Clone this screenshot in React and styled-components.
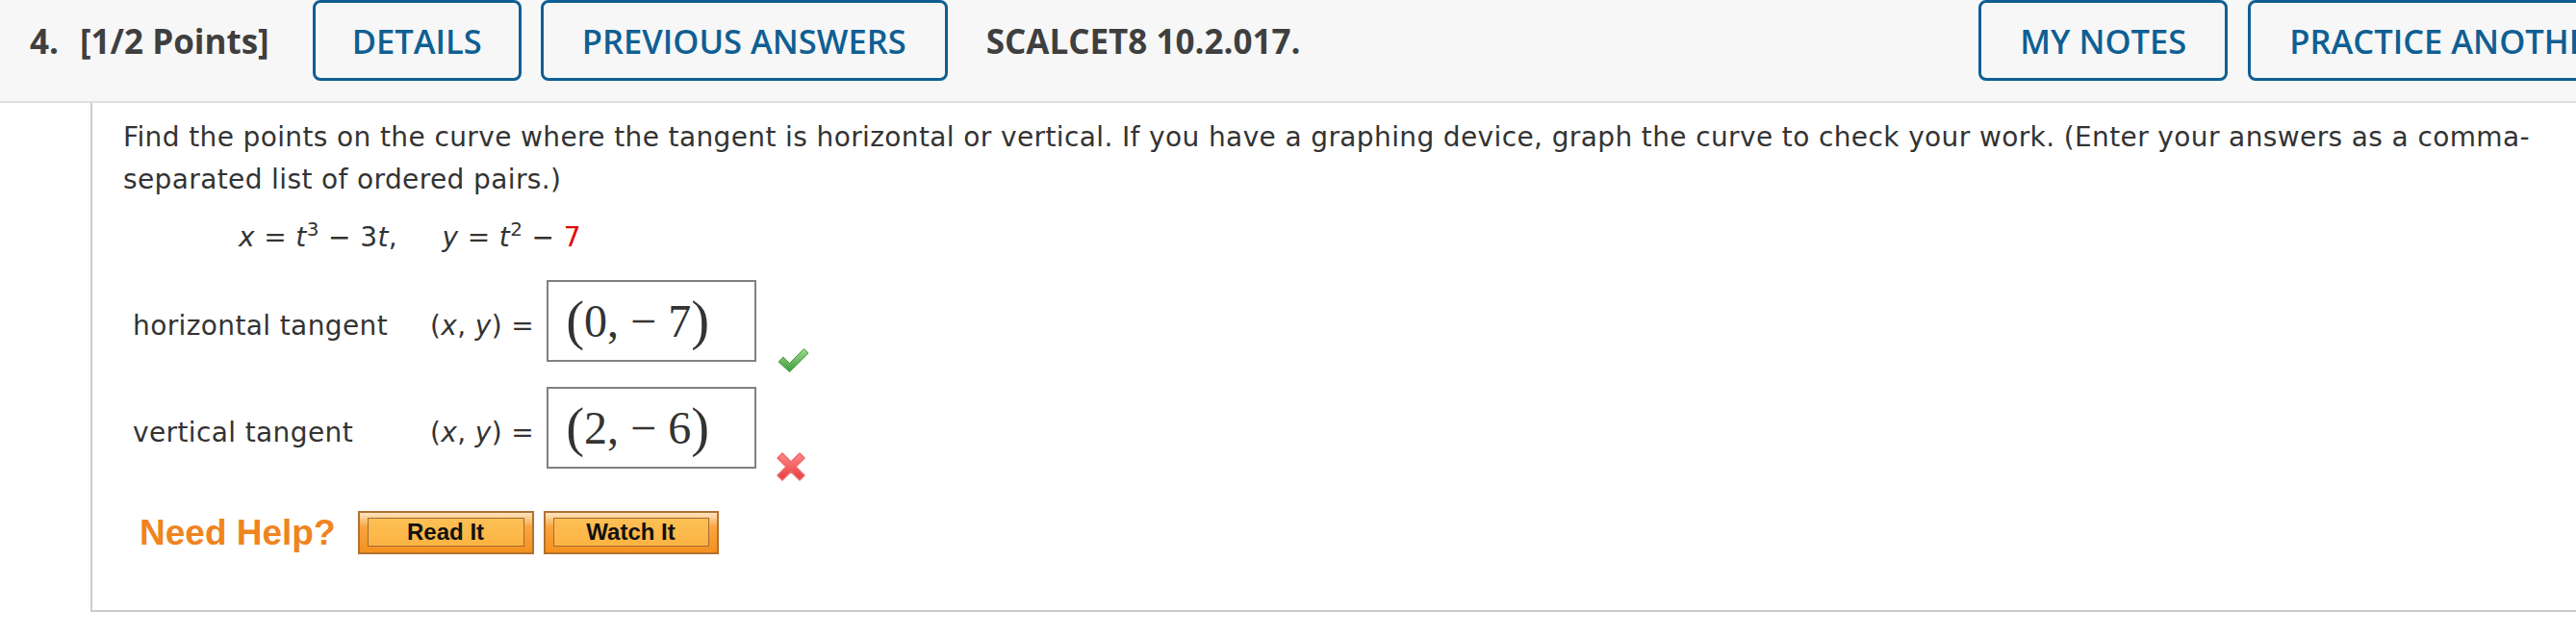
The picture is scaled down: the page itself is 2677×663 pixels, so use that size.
import React from 'react';
import styled, { createGlobalStyle } from 'styled-components';

const GlobalStyle = createGlobalStyle`
  html, body {
    margin: 0;
    padding: 0;
    background: #fff;
  }
  body {
    overflow: hidden;
  }
`;

const Page = styled.div`
  width: 2677px;
  height: 663px;
  overflow: hidden;
  background: #fff;
`;

const Header = styled.header`
  height: 84px;
  padding-bottom: 21px;
  background: #f7f7f7;
  border-bottom: 2px solid #dedede;
  overflow: hidden;
`;

const HeaderRow = styled.div`
  display: flex;
  align-items: center;
  width: 2754px;
  height: 100%;
  padding-left: 31px;
  box-sizing: border-box;
  font-family: "Open Sans", sans-serif;
  white-space: nowrap;
`;

const HeadText = styled.span`
  flex-shrink: 0;
  margin-left: ${(p) => p.$gap || 0}px;
  font-size: 35px;
  font-weight: 700;
  color: #3f3f3f;
`;

const OutlineButton = styled.button`
  flex-shrink: 0;
  height: 84px;
  margin-left: ${(p) => p.$gap || 0}px;
  padding: 0 ${(p) => p.$pad || 40}px;
  border: 3px solid #0f5f93;
  border-radius: 8px;
  background: transparent;
  color: #0f5f93;
  font-family: "Open Sans", sans-serif;
  font-size: 34.5px;
  font-weight: 600;
  white-space: nowrap;
  cursor: pointer;
`;

const RightGroup = styled.div`
  display: flex;
  gap: 21px;
  margin-left: auto;
`;

const Panel = styled.section`
  width: 2700px;
  margin-left: 94px;
  padding: 14px 0 58px 32px;
  box-sizing: border-box;
  border-left: 2px solid #cccccc;
  border-bottom: 2px solid #cccccc;
  font-family: "DejaVu Sans", Verdana, sans-serif;
  font-size: 28px;
  letter-spacing: 0.38px;
  line-height: 44px;
  color: #333;
`;

const Prompt = styled.p`
  margin: 0;
  white-space: nowrap;
`;

const Equation = styled.div`
  margin-top: 16px;
  padding-left: 120px;
  white-space: pre;
`;

const Var = styled.i`
  font-style: italic;
`;

const Sup = styled.sup`
  font-size: 20px;
  line-height: 0;
  vertical-align: 11px;
`;

const Red = styled.span`
  color: #e60000;
`;

const AnswerRow = styled.div`
  display: flex;
  align-items: center;
  margin-top: ${(p) => p.$top}px;
  padding-left: 10px;
`;

const RowLabel = styled.span`
  flex: 0 0 309px;
  padding-top: 10px;
`;

const Coords = styled.span`
  padding-top: 10px;
  margin-right: 13px;
`;

const AnswerBox = styled.div`
  display: flex;
  align-items: center;
  width: 218px;
  height: 85px;
  padding-left: 18px;
  box-sizing: border-box;
  border: 2px solid #808080;
  font-family: "Liberation Serif", "DejaVu Serif", serif;
  font-size: 48px;
  letter-spacing: 0;
  line-height: 1;
  color: #333;
  white-space: pre;
`;

const Paren = styled.span`
  font-size: 1.18em;
`;

const Mark = styled.svg`
  align-self: flex-end;
  margin-left: ${(p) => p.$left}px;
  margin-bottom: ${(p) => p.$drop}px;
`;

const HelpRow = styled.div`
  display: flex;
  align-items: center;
  gap: 10px;
  margin-top: 44px;
  padding-left: 17px;
`;

const NeedHelp = styled.span`
  margin-right: 13px;
  font-family: "Liberation Sans", Arial, sans-serif;
  font-size: 37px;
  font-weight: 700;
  letter-spacing: 0;
  line-height: 1;
  color: #ef8420;
`;

const HelpButton = styled.button`
  width: ${(p) => p.$w}px;
  height: 45px;
  padding: 5px 8px 6px;
  box-sizing: border-box;
  border: 2px solid #b3712f;
  background: linear-gradient(#ffe6c2 0%, #f9a640 35%, #f3901f 100%);
  cursor: pointer;
`;

const HelpFace = styled.span`
  display: flex;
  align-items: center;
  justify-content: center;
  height: 100%;
  box-sizing: border-box;
  border: 1.5px solid #a36c33;
  background: linear-gradient(#fdbf55, #fcb443);
  font-family: "Liberation Sans", Arial, sans-serif;
  font-size: 24px;
  font-weight: 700;
  color: #111;
`;

const CheckIcon = () => (
  <Mark width="33" height="27" viewBox="0 0 33 27" $left={22} $drop={-12}>
    <defs>
      <linearGradient id="okGrad" x1="0" y1="0" x2="0" y2="1">
        <stop offset="0" stopColor="#9ddb8c" />
        <stop offset="1" stopColor="#3f9b3c" />
      </linearGradient>
    </defs>
    <path
      d="M1 15 L6 10 L12.5 16.5 L27.5 1.5 L32 6 L12.5 25.5 Z"
      fill="url(#okGrad)"
      stroke="#4c9c45"
      strokeWidth="1"
      strokeLinejoin="round"
    />
  </Mark>
);

const CrossIcon = () => (
  <Mark width="30" height="30" viewBox="0 0 30 30" $left={21} $drop={-13}>
    <defs>
      <linearGradient id="noGrad" x1="0" y1="0" x2="0" y2="1">
        <stop offset="0" stopColor="#ff8a8a" />
        <stop offset="1" stopColor="#e53b3b" />
      </linearGradient>
    </defs>
    <path
      d="M6 1 L15 10 L24 1 L29 6 L20 15 L29 24 L24 29 L15 20 L6 29 L1 24 L10 15 L1 6 Z"
      fill="url(#noGrad)"
      stroke="#f06a6a"
      strokeWidth="1.5"
      strokeLinejoin="round"
    />
  </Mark>
);

const XY = () => (
  <Coords>
    (<Var>x</Var>, <Var>y</Var>) =
  </Coords>
);

const App = () => {
  return (
    <Page>
      <GlobalStyle />
      <Header>
        <HeaderRow>
          <HeadText>4.</HeadText>
          <HeadText $gap={22}>[1/2 Points]</HeadText>
          <OutlineButton $gap={45} $pad={38}>DETAILS</OutlineButton>
          <OutlineButton $gap={20}>PREVIOUS ANSWERS</OutlineButton>
          <HeadText $gap={40}>SCALCET8 10.2.017.</HeadText>
          <RightGroup>
            <OutlineButton>MY NOTES</OutlineButton>
            <OutlineButton>PRACTICE ANOTHER</OutlineButton>
          </RightGroup>
        </HeaderRow>
      </Header>

      <Panel>
        <Prompt>
          Find the points on the curve where the tangent is horizontal or vertical. If you have a
          graphing device, graph the curve to check your work. (Enter your answers as a comma-
          <br />
          separated list of ordered pairs.)
        </Prompt>
        <Equation>
          <Var>x</Var> = <Var>t</Var><Sup>3</Sup> − 3<Var>t</Var>,     <Var>y</Var> ={' '}
          <Var>t</Var><Sup>2</Sup> − <Red>7</Red>
        </Equation>

        <AnswerRow $top={22}>
          <RowLabel>horizontal tangent</RowLabel>
          <XY />
          <AnswerBox>
            <Paren>(</Paren>0, − 7<Paren>)</Paren>
          </AnswerBox>
          <CheckIcon />
        </AnswerRow>

        <AnswerRow $top={26}>
          <RowLabel>vertical tangent</RowLabel>
          <XY />
          <AnswerBox>
            <Paren>(</Paren>2, − 6<Paren>)</Paren>
          </AnswerBox>
          <CrossIcon />
        </AnswerRow>

        <HelpRow>
          <NeedHelp>Need Help?</NeedHelp>
          <HelpButton $w={183}>
            <HelpFace>Read It</HelpFace>
          </HelpButton>
          <HelpButton $w={182}>
            <HelpFace>Watch It</HelpFace>
          </HelpButton>
        </HelpRow>
      </Panel>
    </Page>
  );
};

export default App;
